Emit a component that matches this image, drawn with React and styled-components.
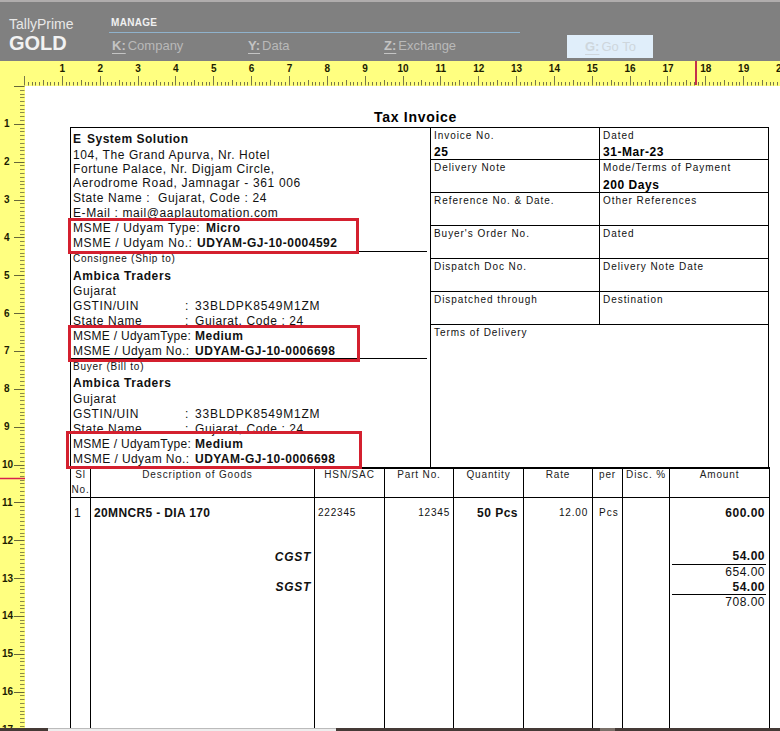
import React from "react";
import styled, { createGlobalStyle } from "styled-components";

const Global = createGlobalStyle`
  html, body { margin: 0; padding: 0; background: #fff; }
  body { font-family: "Liberation Sans", Arial, sans-serif; }
`;

const Shell = styled.div`
  width: 780px; height: 731px; overflow: hidden; display: flex; flex-direction: column; background: #fff;
`;
const Header = styled.header`
  height: 59px; flex: none; background: #808080; border-top: 2px solid #b0adad; display: flex; color: #fff;
`;
const Brand = styled.div`
  width: 109px; flex: none; padding: 14px 0 0 9px; box-sizing: border-box;
`;
const BrandTop = styled.div`font-size: 14px; line-height: 16px; color: #e8e8e8;`;
const BrandGold = styled.div`font-size: 20px; line-height: 22px; font-weight: 700; color: #f2f2f2;`;
const Menu = styled.div`width: 411px; flex: none; padding-top: 15px;`;
const MenuTitle = styled.div`
  font-size: 10px; line-height: 12px; font-weight: 700; color: #f0f0f0; padding: 0 0 3px 2px; letter-spacing: .3px;
  border-bottom: 1px solid #8fb2cc;
`;
const MenuItems = styled.div`display: flex; padding: 4px 0 0 3px;`;
const MenuItem = styled.div`width: 137px; font-size: 13px; line-height: 18px; color: #b9b9b9;`;
const Key = styled.span`
  font-weight: 700; margin-right: 2px; color: ${p => p.$c || "#c4c4c4"};
  text-decoration: underline; text-underline-offset: 3px;
`;
const GoTo = styled.div`
  margin: 33px 0 0 47px; width: 86px; height: 23px; background: #e0eefa; color: #ced6dc;
  font-size: 13px; line-height: 23px; padding-left: 18px; box-sizing: border-box;
`;

const Body = styled.div`flex: 1; min-height: 0; display: flex; flex-direction: column;`;
const TopRuler = styled.svg`display: block; flex: none; width: 780px; height: 25px; background: #ffff80;`;
const Work = styled.div`flex: 1; min-height: 0; display: flex;`;
const SideRuler = styled.svg`display: block; flex: none; width: 25px; height: 642px; background: #ffff80;`;
const RulerLabel = styled.text`font: 700 10px "Liberation Sans", Arial, sans-serif; fill: #1c1c00;`;
const Sheet = styled.main`
  flex: 1; min-width: 0; padding: 22px 11px 0 45px; display: flex; flex-direction: column; overflow: hidden;
  color: #111;
`;
const Title = styled.h1`
  margin: 0 8px 1px 0; font-size: 14px; line-height: 18px; height: 18px; font-weight: 700; text-align: center; letter-spacing: .7px; color: #000;
`;
const Box = styled.section`
  flex: none; border: 1px solid #000; border-bottom: 0; display: grid; grid-template-columns: 360px 1fr; height: 339px;
`;
const Parties = styled.div`position: relative; border-right: 1px solid #000; display: flex; flex-direction: column; padding-top: 2px;`;
const Party = styled.div`
  padding-left: 2px; margin-right: 3px;
  border-bottom: ${p => (p.$last ? "0" : "1px solid #000")};
`;
const Row = styled.div`
  height: ${p => p.$h}px; line-height: ${p => p.$lh || p.$h}px; overflow: hidden; white-space: pre;
  font-size: ${p => (p.$small ? 10 : 12)}px; letter-spacing: ${p => p.$sp || (p.$small ? ".75px" : ".6px")};
  font-weight: ${p => (p.$bold ? 700 : 400)};
  background: #fff;
`;
const FieldLabel = styled.span`
  display: inline-block; width: ${p => p.$w}px; letter-spacing: ${p => p.$sp || ".6px"};
`;
const FieldCode = styled.span`letter-spacing: .8px;`;
const Strong = styled.b`font-weight: 700; letter-spacing: .5px;`;
const Highlight = styled.div`
  position: absolute; border: 3px solid #d4202f; box-sizing: border-box; pointer-events: none;
  left: ${p => p.$x}px; top: ${p => p.$y}px; width: ${p => p.$w}px; height: ${p => p.$h}px;
`;
const Details = styled.div`
  display: grid; grid-template-columns: 169px 1fr; grid-template-rows: 32px repeat(5, 33px) 1fr;
`;
const Cell = styled.div`
  padding: 1px 0 0 3px; border-bottom: ${p => (p.$wide ? "0" : "1px solid #000")};
  border-right: ${p => (p.$left ? "1px solid #000" : "0")};
  grid-column: ${p => (p.$wide ? "1 / -1" : "auto")};
  display: flex; flex-direction: column; justify-content: space-between; box-sizing: border-box; overflow: hidden;
`;
const CellLabel = styled.div`font-size: 10px; line-height: 13px; letter-spacing: .95px; white-space: nowrap;`;
const CellValue = styled.div`font-size: 12px; line-height: 13px; font-weight: 700; letter-spacing: .55px; color: #000;`;

const Table = styled.section`
  flex: 1; display: grid; border: 1px solid #000; border-top: 2px solid #000; border-bottom: 0; margin-right: -1px;
  grid-template-columns: 20px 224px 70px 69px 70px 69px 30px 47px 1fr;
  grid-template-rows: 29px 1fr;
`;
const Head = styled.div`
  border-right: ${p => (p.$last ? 0 : "1px solid #000")}; border-bottom: 1px solid #000;
  padding-right: ${p => p.$pr || 0}px; margin-top: -2px; white-space: pre-line;
  font-size: 10px; line-height: 15px; letter-spacing: .85px; text-align: center; color: #222;
`;
const Col = styled.div`
  border-right: ${p => (p.$last ? 0 : "1px solid #000")}; display: flex; flex-direction: column; padding-top: 7px;
`;
const Val = styled.div`
  height: ${p => p.$h || 16}px; line-height: ${p => p.$h || 16}px;
  font-size: ${p => (p.$small ? 10 : 12)}px; letter-spacing: ${p => p.$sp || (p.$small ? ".8px" : ".35px")};
  font-weight: ${p => (p.$bold ? 700 : 400)}; font-style: ${p => (p.$it ? "italic" : "normal")};
  text-align: ${p => p.$align || "left"}; padding: ${p => p.$pad || "0 3px"};
  margin-top: ${p => p.$mt || 0}px; white-space: pre; color: #111;
`;
const Rule = styled.div`height: 1px; background: #000; margin: 0 3px 0 ${p => p.$ml || 2}px;`;
const Footer = styled.footer`
  flex: none; height: 3px; display: flex; background: #453a36;
`;
const FooterGap = styled.div`margin-left: 48px; width: 288px; background: #eee; border-top: 1px solid #bbb; box-sizing: border-box;`;
const FooterTint = styled.div`margin-left: 264px; width: 15px; background: #7b716a;`;

const STEP = 37.85;
const ticks = Array.from({ length: 200 }, (_, i) => i);

function HRuler() {
  return (
    <TopRuler viewBox="0 0 780 25">
      {ticks.filter(i => 25 + i * STEP / 10 < 780).map(i => {
        const x = Math.round(25 + (i * STEP) / 10) - 0.5;
        const top = i % 10 === 0 ? 15 : i % 5 === 0 ? 19 : 21;
        return <line key={i} x1={x} x2={x} y1={top} y2={24.5} stroke="#77774a" strokeWidth="1" />;
      })}
      {Array.from({ length: 20 }, (_, i) => (
        <RulerLabel key={i} x={24.5 + (i + 1) * STEP} y="11" textAnchor="middle">{i + 1}</RulerLabel>
      ))}
      <line x1="696" x2="696" y1="0" y2="24" stroke="#c4304c" strokeWidth="2" />
    </TopRuler>
  );
}

function VRuler() {
  return (
    <SideRuler viewBox="0 0 25 642">
      {ticks.filter(i => i * STEP / 10 < 642).map(i => {
        const y = Math.round((i * STEP) / 10) + 0.5;
        const left = i % 10 === 0 ? 14 : 20;
        return <line key={i} x1={left} x2="24.5" y1={y} y2={y} stroke={i % 10 === 0 ? "#66663a" : "#8a8a4a"} strokeWidth="1" />;
      })}
      {Array.from({ length: 17 }, (_, i) => (
        <RulerLabel key={i} x="4" y={(i + 1) * STEP + 3.5} dx={i < 9 ? 0 : -2}>{i + 1}</RulerLabel>
      ))}
      <line x1="0" x2="25" y1="392.5" y2="392.5" stroke="#d8204f" strokeWidth="1.5" />
    </SideRuler>
  );
}

const details = [
  ["Invoice No.", "25", "Dated", "31-Mar-23"],
  ["Delivery Note", "", "Mode/Terms of Payment", "200 Days"],
  ["Reference No. & Date.", "", "Other References", ""],
  ["Buyer's Order No.", "", "Dated", ""],
  ["Dispatch Doc No.", "", "Delivery Note Date", ""],
  ["Dispatched through", "", "Destination", ""],
];

const heads = ["Sl\nNo.", "Description of Goods", "HSN/SAC", "Part No.", "Quantity", "Rate", "per", "Disc. %", "Amount"];

function PartyBlock({ label, labelH, nameLh, type, no, last }) {
  return (
    <Party $last={last}>
      <Row $h={labelH} $small>{label}</Row>
      <Row $h={18} $lh={nameLh} $bold>Ambica Traders</Row>
      <Row $h={15}>Gujarat</Row>
      <Row $h={15}><FieldLabel $w={112}>GSTIN/UIN</FieldLabel><FieldLabel $w={10}>:</FieldLabel><FieldCode>33BLDPK8549M1ZM</FieldCode></Row>
      <Row $h={14} $lh={15}><FieldLabel $w={112}>State Name</FieldLabel><FieldLabel $w={10}>:</FieldLabel>Gujarat, Code : 24</Row>
      <Row $h={16}><FieldLabel $w={122} $sp=".28px">MSME / UdyamType:</FieldLabel><Strong>{type}</Strong></Row>
      <Row $h={14}><FieldLabel $w={122} $sp=".42px">MSME / Udyam No.:</FieldLabel><Strong>{no}</Strong></Row>
    </Party>
  );
}

export default function App() {
  return (
    <Shell>
      <Global />
      <Header>
        <Brand>
          <BrandTop>TallyPrime</BrandTop>
          <BrandGold>GOLD</BrandGold>
        </Brand>
        <Menu>
          <MenuTitle>MANAGE</MenuTitle>
          <MenuItems>
            <MenuItem><Key>K:</Key>Company</MenuItem>
            <MenuItem><Key>Y:</Key>Data</MenuItem>
            <MenuItem><Key>Z:</Key>Exchange</MenuItem>
          </MenuItems>
        </Menu>
        <GoTo><Key $c="#ced6dc">G:</Key>Go To</GoTo>
      </Header>
      <Body>
        <HRuler />
        <Work>
          <VRuler />
          <Sheet>
            <Title>Tax Invoice</Title>
            <Box>
              <Parties>
                <Party>
                  <Row $h={18} $bold $sp=".5px"><FieldLabel $w={14}>E</FieldLabel>System Solution</Row>
                  <Row $h={14}>104, The Grand Apurva, Nr. Hotel</Row>
                  <Row $h={14}>Fortune Palace, Nr. Digjam Circle,</Row>
                  <Row $h={15} $sp=".66px">Aerodrome Road, Jamnagar - 361 006</Row>
                  <Row $h={15}>State Name :  Gujarat, Code : 24</Row>
                  <Row $h={14} $lh={15}>E-Mail : mail@aaplautomation.com</Row>
                  <Row $h={16}><FieldLabel $w={133}>MSME / Udyam Type:</FieldLabel><Strong>Micro</Strong></Row>
                  <Row $h={15}><FieldLabel $w={124}>MSME / Udyam No.:</FieldLabel><Strong>UDYAM-GJ-10-0004592</Strong></Row>
                </Party>
                <PartyBlock label="Consignee (Ship to)" labelH={14} nameLh={20} type="Medium" no="UDYAM-GJ-10-0006698" />
                <PartyBlock last label="Buyer (Bill to)" labelH={15} nameLh={18} type="Medium" no="UDYAM-GJ-10-0006698" />
                <Highlight $x={-3} $y={90} $w={291} $h={36} />
                <Highlight $x={-3} $y={197} $w={292} $h={37} />
                <Highlight $x={-5} $y={303} $w={296} $h={38} />
              </Parties>
              <Details>
                {details.map((d, i) => (
                  <React.Fragment key={i}>
                    <Cell $left>
                      <CellLabel>{d[0]}</CellLabel>
                      {d[1] && <CellValue>{d[1]}</CellValue>}
                    </Cell>
                    <Cell>
                      <CellLabel>{d[2]}</CellLabel>
                      {d[3] && <CellValue>{d[3]}</CellValue>}
                    </Cell>
                  </React.Fragment>
                ))}
                <Cell $wide><CellLabel>Terms of Delivery</CellLabel></Cell>
              </Details>
            </Box>
            <Table>
              {heads.map((h, i) => (
                <Head key={i} $last={i === heads.length - 1} $pr={i === 1 ? 10 : 0}>{h}</Head>
              ))}
              <Col><Val>1</Val></Col>
              <Col>
                <Val $bold>20MNCR5 - DIA 170</Val>
                <Val $bold $it $align="right" $mt={28} $sp=".7px" $pad="0 3px 0 0">CGST</Val>
                <Val $bold $it $align="right" $mt={14} $sp=".7px" $pad="0 3px 0 0">SGST</Val>
              </Col>
              <Col><Val $small>222345</Val></Col>
              <Col><Val $small $align="right">12345</Val></Col>
              <Col><Val $bold $align="right" $sp=".5px" $pad="0 5px 0 0">50 Pcs</Val></Col>
              <Col><Val $small $align="right" $pad="0 4px 0 0">12.00</Val></Col>
              <Col><Val $small $pad="0 0 0 6px" $sp="1px">Pcs</Val></Col>
              <Col />
              <Col $last>
                <Val $bold $align="right" $sp=".5px" $pad="0 4px">600.00</Val>
                <Val $bold $align="right" $mt={28} $h={15} $sp=".5px" $pad="0 4px">54.00</Val>
                <Rule />
                <Val $align="right" $h={15} $sp=".5px" $pad="0 4px">654.00</Val>
                <Val $bold $align="right" $h={14} $sp=".5px" $pad="0 4px">54.00</Val>
                <Rule />
                <Val $align="right" $h={15} $sp=".5px" $pad="0 4px">708.00</Val>
              </Col>
            </Table>
          </Sheet>
        </Work>
      </Body>
      <Footer><FooterGap /><FooterTint /></Footer>
    </Shell>
  );
}
